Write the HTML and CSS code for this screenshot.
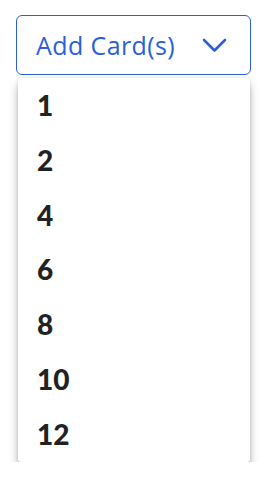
FILE: index.html
```html
<!DOCTYPE html>
<html lang="en">
<head>
  <meta charset="UTF-8" />
  <meta name="viewport" content="width=device-width, initial-scale=1.0"/>
  <title>Add Card(s)</title>
  <link rel="stylesheet" href="styles.css">
</head>
<body>

<div class="picker">
  <button class="picker-btn">
    <span>Add Card(s)</span>
    <svg class="chevron" width="25" height="15" viewBox="0 0 25 15">
      <path d="M2 2 L12.5 12.5 L23 2" fill="none" stroke="#2b5fd9" stroke-width="2.6" stroke-linecap="round" stroke-linejoin="round"/>
    </svg>
  </button>

  <ul class="picker-menu">
    <li>1</li>
    <li>2</li>
    <li>4</li>
    <li>6</li>
    <li>8</li>
    <li>10</li>
    <li>12</li>
  </ul>
</div>

</body>
</html>
```

FILE: styles.css
```css
body {
  margin: 0;
  font-family: 'Lato', 'Open Sans', sans-serif;
  background-color: #fff;
}

.picker {
  padding: 15px 17px 0 16px;
  width: 235px;
}

.picker-btn {
  display: flex;
  align-items: center;
  justify-content: space-between;
  box-sizing: border-box;
  width: 235px;
  height: 60px;
  padding: 0 23px 0 19px;
  border: 1.5px solid #2b5fd9;
  border-radius: 6px;
  background: white;
  color: #2b5fd9;
  font-family: 'Open Sans', sans-serif;
  font-size: 25px;
  letter-spacing: 0.4px;
  cursor: pointer;
}

.chevron {
  margin-top: 1px;
}

.picker-menu {
  list-style: none;
  margin: 3px 1px 0 2px;
  padding: 0;
  background: white;
  border-radius: 3px;
  box-shadow: 0 7px 10px rgba(0,0,0,0.28), 0 0 3px rgba(0,0,0,0.14);
}

.picker-menu li {
  height: 54.8px;
  line-height: 54px;
  padding-left: 19px;
  font-size: 28px;
  font-weight: 900;
  color: #222;
}
```
